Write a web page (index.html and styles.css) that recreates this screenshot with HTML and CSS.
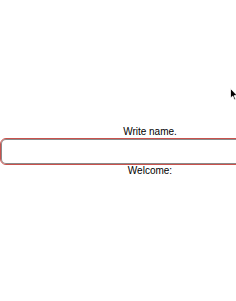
FILE: index.html
```html
<!DOCTYPE html>
<html lang="en">
<head>
    <meta charset="UTF-8">
    <meta name="viewport" content="width=device-width, initial-scale=1.0">
    <title>Welcome</title>
    <link rel="stylesheet" href="styles.css">
</head>
<body>
    <div class="page">
        <label for="name" class="label">Write name.</label>
        <input type="text" id="name" class="name-input">
        <p class="greeting">Welcome:</p>
    </div>
    <svg class="pointer" width="8" height="13" viewBox="0 0 8 13">
        <path d="M0.5 0.5 L0.5 10 L2.8 8 L4.3 11.8 L5.6 11.3 L4.2 7.6 L7.2 7.6 Z" fill="#000" stroke="#fff" stroke-width="0.8"/>
    </svg>
</body>
</html>
```

FILE: styles.css
```css
*{
    box-sizing: border-box;
    margin: 0;
    padding: 0;
}
html, body{
    background-color: #fff;
    overflow: hidden;
}
body{
    font-family: "Liberation Sans", Arial, sans-serif;
    font-size: 10px;
    color: #000;
}
.page{
    width: 300px;
    padding-top: 126px;
    text-align: center;
}
.label{
    display: block;
    line-height: 12px;
}
.name-input{
    display: block;
    width: 300px;
    height: 27px;
    border: 1px solid #c9524d;
    border-radius: 6px;
    box-shadow: inset 0 0 0 1px #8a8a8a;
    background-color: #fff;
    outline: none;
}
.greeting{
    line-height: 12px;
    margin-top: 0;
}
.pointer{
    position: absolute;
    left: 230px;
    top: 88px;
}
```
